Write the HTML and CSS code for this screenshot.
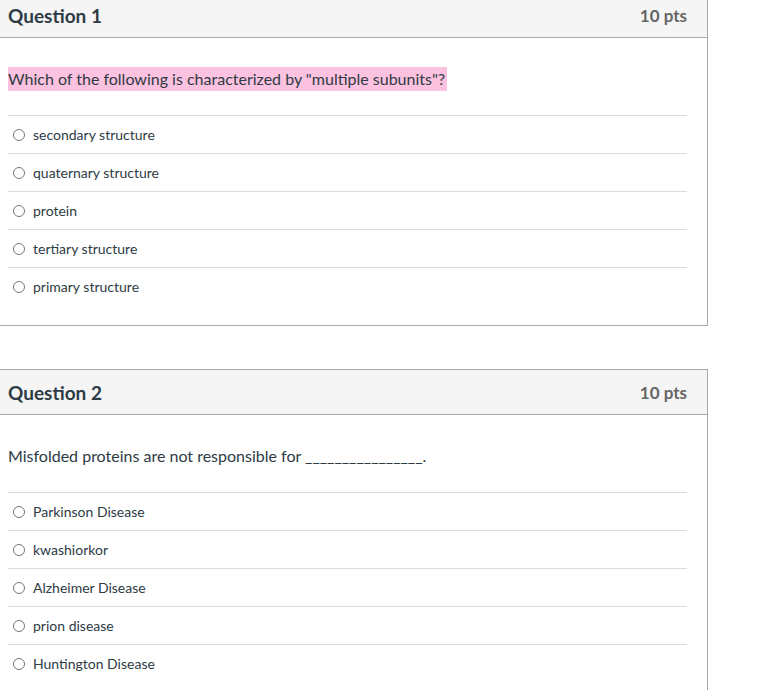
FILE: index.html
```html
<!DOCTYPE html>
<html lang="en">
<head>
<meta charset="utf-8">
<title>Quiz</title>
<link rel="stylesheet" href="styles.css">
</head>
<body>
<div class="quiz">
  <div class="question">
    <div class="q-header">
      <span class="q-name">Question 1</span>
      <span class="q-pts">10 pts</span>
    </div>
    <div class="q-body">
      <div class="q-text"><span class="hl">Which of the following is characterized by "multiple subunits"?</span></div>
      <div class="answers">
        <label class="answer"><span class="radio"></span><span class="a-text">secondary structure</span></label>
        <label class="answer"><span class="radio"></span><span class="a-text">quaternary structure</span></label>
        <label class="answer"><span class="radio"></span><span class="a-text">protein</span></label>
        <label class="answer"><span class="radio"></span><span class="a-text">tertiary structure</span></label>
        <label class="answer"><span class="radio"></span><span class="a-text">primary structure</span></label>
      </div>
    </div>
  </div>
  <div class="question">
    <div class="q-header">
      <span class="q-name">Question 2</span>
      <span class="q-pts">10 pts</span>
    </div>
    <div class="q-body">
      <div class="q-text">Misfolded proteins are not responsible for ________________.</div>
      <div class="answers">
        <label class="answer"><span class="radio"></span><span class="a-text">Parkinson Disease</span></label>
        <label class="answer"><span class="radio"></span><span class="a-text">kwashiorkor</span></label>
        <label class="answer"><span class="radio"></span><span class="a-text">Alzheimer Disease</span></label>
        <label class="answer"><span class="radio"></span><span class="a-text">prion disease</span></label>
        <label class="answer"><span class="radio"></span><span class="a-text">Huntington Disease</span></label>
      </div>
    </div>
  </div>
</div>
</body>
</html>
```
FILE: styles.css
```css
html, body {
  margin: 0;
  padding: 0;
  background: #fff;
}
body {
  font-family: Lato, "Liberation Sans", sans-serif;
  color: #2d3b45;
  overflow: hidden;
}
.quiz {
  margin-top: -8px;
  margin-left: -1px;
  width: 709px;
  display: flex;
  flex-direction: column;
  gap: 43px;
}
.question {
  border: 1px solid #a9a9a9;
}
.q-header {
  height: 45px;
  box-sizing: border-box;
  background: #f5f5f5;
  border-bottom: 1px solid #a9a9a9;
  display: flex;
  align-items: center;
  justify-content: space-between;
  padding: 0 20px 0 8px;
}
.q-name {
  font-size: 19px;
  font-weight: 700;
  color: #2d3b45;
}
.q-pts {
  font-size: 17px;
  font-weight: 700;
  color: #666;
}
.q-body {
  padding: 29px 20px 20px 8px;
}
.q-text {
  font-size: 16px;
  line-height: 24px;
  height: 24px;
  margin-bottom: 24px;
}
.hl {
  display: inline-block;
  background: #fdc2df;
  line-height: 24px;
  padding-right: 2px;
}
.answers {
  display: flex;
  flex-direction: column;
}
.answer {
  height: 38px;
  box-sizing: border-box;
  border-top: 1px solid #dcdcdc;
  display: flex;
  align-items: center;
  font-size: 14px;
  color: #2d3b45;
}
.radio {
  width: 12px;
  height: 12px;
  box-sizing: border-box;
  border: 1px solid #777;
  border-radius: 50%;
  margin: 0 8px 0 5px;
  flex: none;
}
```
